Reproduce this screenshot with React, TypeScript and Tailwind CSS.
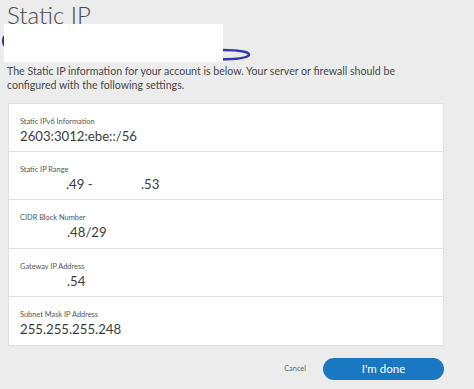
import React from "react";

/* ── Filas de la tarjeta ── */
const ROWS = [
  { label: "Static IPv6 Information", value: "2603:3012:ebe::/56" },
  { label: "Static IP Range", value: "" },
  { label: "CIDR Block Number", value: ".48/29", indent: "pl-[47px]" },
  { label: "Gateway IP Address", value: ".54", indent: "pl-[47px]" },
  { label: "Subnet Mask IP Address", value: "255.255.255.248" },
];

export default function App() {
  return (
    <div
      className="w-[474px] h-[389px] bg-[#ececec] text-[#444] overflow-hidden pt-[1px]"
      style={{ fontFamily: 'Lato, "Liberation Sans", sans-serif' }}
    >
      {/* Título */}
      <h1 className="relative z-10 pl-[7px] text-[24px] leading-[28px] font-light text-[#4a4a4a]">
        Static IP
      </h1>

      {/* Zona tapada con el trazo azul */}
      <div className="relative h-[38px] mt-[-5px]">
        <svg className="absolute left-0 top-0" width="260" height="40" viewBox="0 0 260 40">
          <path d="M4 13 C3 16 3 20 5 22" stroke="#2e3192" strokeWidth="2.5" fill="none" strokeLinecap="round" />
          <path d="M200 27 C225 25 250 26 249 31 C247 35 225 36 200 35" stroke="#3538a8" strokeWidth="2.5" fill="none" strokeLinecap="round" />
        </svg>
        <div className="absolute left-[4px] top-0 w-[219px] h-[38px] bg-white" />
      </div>

      {/* Descripción */}
      <p className="pl-[7px] w-[402px] text-[10.6px] leading-[13.5px] text-[#474747] mt-[3px]">
        The Static IP information for your account is below. Your server or firewall should be configured with the following settings.
      </p>

      {/* Tarjeta */}
      <div className="ml-[8px] mt-[11px] w-[436px] bg-white border border-[#e0e0e0]">
        {ROWS.map((r, i) => (
          <div
            key={r.label}
            className={`h-[48.2px] pl-[11px] pt-[13px] ${i < ROWS.length - 1 ? "border-b border-[#e2e2e2]" : ""}`}
          >
            <div className="text-[7.4px] leading-[10px] text-[#555]">{r.label}</div>
            {r.label === "Static IP Range" ? (
              <div className="text-[13.2px] leading-[18px] text-[#3c3c3c] pl-[46px]">
                <span className="inline-block w-[75px]">.49 -</span>
                <span>.53</span>
              </div>
            ) : (
              <div className={`text-[13.2px] leading-[18px] text-[#3c3c3c] ${r.indent ?? ""}`}>{r.value}</div>
            )}
          </div>
        ))}
      </div>

      {/* Botones */}
      <div className="flex items-center justify-end pr-[30px] mt-[12px] gap-[17px]">
        <button className="text-[7.4px] text-[#666]">Cancel</button>
        <button className="w-[121px] h-[22px] rounded-full bg-[#1a78c2] text-white text-[11.5px] leading-[22px]">
          I'm done
        </button>
      </div>
    </div>
  );
}
